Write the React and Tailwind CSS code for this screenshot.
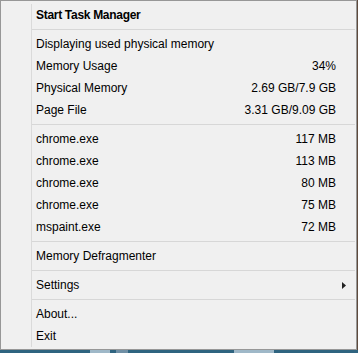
import React from "react";

const font = { fontFamily: '"Liberation Sans", Arial, sans-serif' };

function Item({ label, value, bold, arrow }) {
  return (
    <div className={"h-[22px] flex items-center justify-between pl-[4px] " + (arrow ? "pr-[9px]" : "pr-[19px]")}>
      <span className={bold ? "font-bold tracking-[-0.3px]" : ""}>{label}</span>
      {value && <span>{value}</span>}
      {arrow && (
        <svg width="4" height="7" viewBox="0 0 4 7" className="block">
          <path d="M0 0 L4 3.5 L0 7 Z" fill="#222" />
        </svg>
      )}
    </div>
  );
}

function Sep() {
  return (
    <div className="h-[7px] flex flex-col justify-center">
      <div className="h-px bg-[#d7d7d7]" />
    </div>
  );
}

export default function App() {
  return (
    <div className="w-[358px] h-[353px] bg-[#2f6480] flex flex-col overflow-hidden">
      <div className="flex h-[350px]">
        <div className="w-[357px] h-[350px] border border-[#979797] bg-[#f0f0f0] pt-[3px] pb-[2px] pr-[1px] text-[12px] text-black leading-none" style={font}>
          <div className="ml-[30px] border-l border-[#dadada] h-full">
            <Item label="Start Task Manager" bold />
            <Sep />
            <Item label="Displaying used physical memory" />
            <Item label="Memory Usage" value="34%" />
            <Item label="Physical Memory" value="2.69 GB/7.9 GB" />
            <Item label="Page File" value="3.31 GB/9.09 GB" />
            <Sep />
            <Item label="chrome.exe" value="117 MB" />
            <Item label="chrome.exe" value="113 MB" />
            <Item label="chrome.exe" value="80 MB" />
            <Item label="chrome.exe" value="75 MB" />
            <Item label="mspaint.exe" value="72 MB" />
            <Sep />
            <Item label="Memory Defragmenter" />
            <Sep />
            <Item label="Settings" arrow />
            <Sep />
            <Item label="About..." />
            <Item label="Exit" />
          </div>
        </div>
        <div className="w-px h-full bg-[#5e4a3c]" />
      </div>
      <div className="flex-1 flex items-start gap-[6px] pl-[90px]">
        <div className="w-[20px] h-[3px] bg-[#9fb8c8]" />
        <div className="w-[12px] h-[3px] bg-[#6f8fa5]" />
        <div className="w-[40px] h-[3px] bg-[#9fb8c8] ml-[100px]" />
      </div>
    </div>
  );
}
